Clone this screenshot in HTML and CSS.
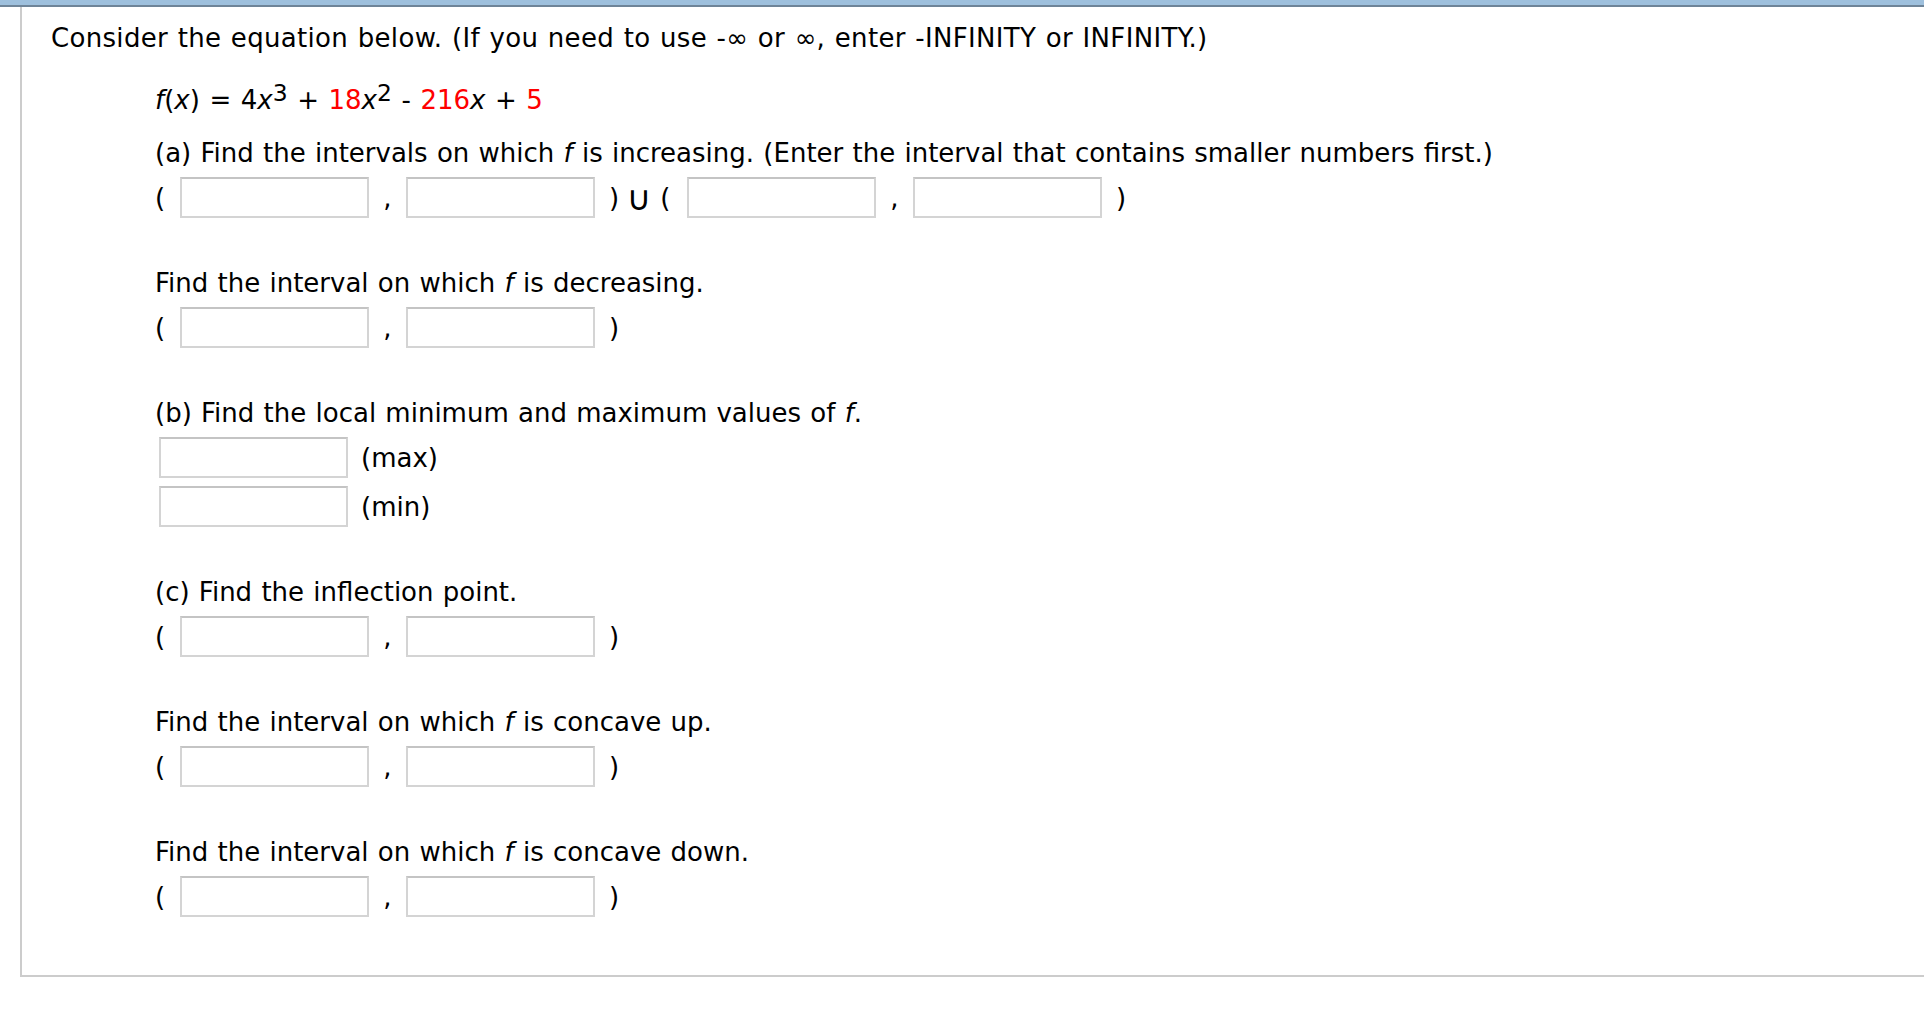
FILE: index.html
```html
<!DOCTYPE html>
<html lang="en">
<head>
<meta charset="utf-8">
<title>Consider the equation below</title>
<link rel="stylesheet" href="styles.css">
</head>
<body>
<div class="topbar"></div>
<div class="card">
  <p class="intro">Consider the equation below. (If you need to use -∞ or ∞, enter -INFINITY or INFINITY.)</p>
  <div class="body">
    <p class="eq"><i>f</i>(<i>x</i>) = 4<i>x</i><sup>3</sup> + <span class="red">18</span><i>x</i><sup>2</sup> - <span class="red">216</span><i>x</i> + <span class="red">5</span></p>

    <p class="q q-a">(a) Find the intervals on which <i>f</i> is increasing. (Enter the interval that contains smaller numbers first.)</p>
    <div class="row">
      <span class="open">(</span><input class="ans" type="text"><span class="comma">,</span><input class="ans" type="text"><span class="mid"><span class="c1">)</span><span class="cup">∪</span><span class="c2">(</span></span><input class="ans" type="text"><span class="comma">,</span><input class="ans" type="text"><span class="close">)</span>
    </div>

    <p class="q">Find the interval on which <i>f</i> is decreasing.</p>
    <div class="row">
      <span class="open">(</span><input class="ans" type="text"><span class="comma">,</span><input class="ans" type="text"><span class="close">)</span>
    </div>

    <p class="q">(b) Find the local minimum and maximum values of <i>f</i>.</p>
    <div class="row row-single">
      <input class="ans" type="text"><span class="label">(max)</span>
    </div>
    <div class="row row-single row-next">
      <input class="ans" type="text"><span class="label">(min)</span>
    </div>

    <p class="q">(c) Find the inflection point.</p>
    <div class="row">
      <span class="open">(</span><input class="ans" type="text"><span class="comma">,</span><input class="ans" type="text"><span class="close">)</span>
    </div>

    <p class="q">Find the interval on which <i>f</i> is concave up.</p>
    <div class="row">
      <span class="open">(</span><input class="ans" type="text"><span class="comma">,</span><input class="ans" type="text"><span class="close">)</span>
    </div>

    <p class="q">Find the interval on which <i>f</i> is concave down.</p>
    <div class="row">
      <span class="open">(</span><input class="ans" type="text"><span class="comma">,</span><input class="ans" type="text"><span class="close">)</span>
    </div>
  </div>
</div>
</body>
</html>
```

FILE: styles.css
```css
html, body {
  margin: 0;
  padding: 0;
  background: #ffffff;
}

body {
  font-family: "DejaVu Sans", Verdana, sans-serif;
  font-size: 26px;
  line-height: 30px;
  word-spacing: 1px;
  color: #000000;
}

.topbar {
  height: 5px;
  background: #9ec0dd;
  border-bottom: 2px solid #6e8498;
}

.card {
  margin-left: 20px;
  border-left: 2px solid #cccccc;
  border-bottom: 2px solid #cccccc;
  padding: 16px 0 58px 29px;
}

.card p {
  margin: 0;
  white-space: nowrap;
}

.intro {
  letter-spacing: 0.32px;
}

.body {
  margin-left: 104px;
}

.eq {
  margin-top: 32px !important;
  word-spacing: 1.3px;
}

.eq sup {
  font-size: 0.9em;
  line-height: 0;
  vertical-align: 8px;
}

.red {
  color: #ff0000;
}

.q {
  margin-top: 50px !important;
}

.q-a {
  margin-top: 23px !important;
}

.row {
  display: flex;
  align-items: center;
  margin-top: 9px;
  height: 41px;
}

.row-next {
  margin-top: 8px;
}

.ans {
  box-sizing: border-box;
  width: 189px;
  height: 41px;
  margin: 0;
  padding: 0 4px;
  font: inherit;
  background: #ffffff;
  border: 2px solid #d4d4d4;
  border-top-color: #c4c4c4;
  border-radius: 0;
  outline: none;
}

.open {
  width: 25px;
  flex: none;
}

.comma {
  width: 37px;
  flex: none;
  text-align: center;
}

.mid {
  width: 92px;
  flex: none;
  display: flex;
  align-items: center;
}

.mid .c1 {
  margin-left: 14px;
}

.mid .cup {
  width: 26px;
  margin-left: 7px;
  text-align: center;
  font-size: 34px;
  line-height: 30px;
}

.mid .c2 {
  margin-left: 8px;
}

.close {
  padding-left: 14px;
}

.row-single .ans {
  margin-left: 4px;
}

.label {
  margin-left: 13px;
}
```
